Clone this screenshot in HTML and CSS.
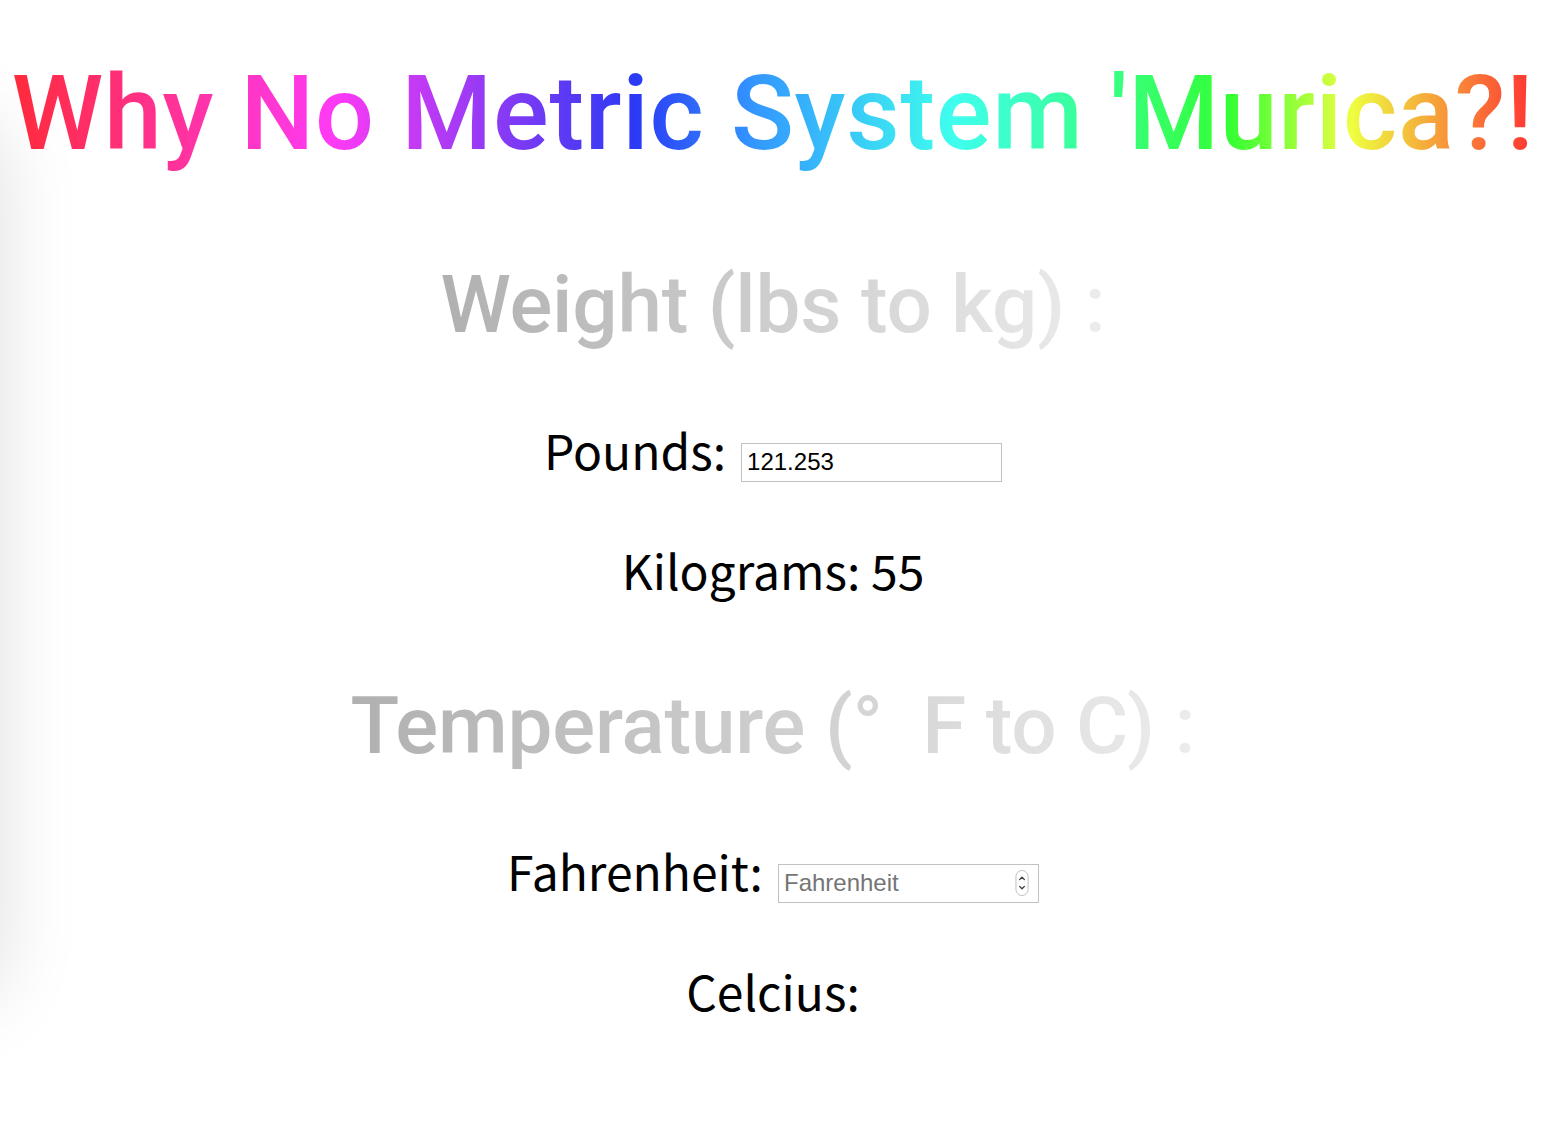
FILE: index.html
```html
<!DOCTYPE html>
<html lang="en">
<head>
<meta charset="utf-8">
<title>Why No Metric System 'Murica?!</title>
<link rel="stylesheet" href="styles.css">
</head>
<body>
<main class="page">
  <h1 class="title"><span class="rainbow">Why No Metric System 'Murica?!</span></h1>

  <h2 class="section"><span class="fade">Weight (lbs to kg) :</span></h2>
  <p class="row"><label class="label" for="lbs">Pounds:</label><span class="field-wrap"><input id="lbs" class="field" type="number" value="121.253"></span></p>
  <p class="row">Kilograms: 55</p>

  <h2 class="section"><span class="fade">Temperature (°&nbsp; F to C) :</span></h2>
  <p class="row"><label class="label" for="fahr">Fahrenheit:</label><span class="field-wrap"><input id="fahr" class="field" type="number" placeholder="Fahrenheit"><span class="spinner" aria-hidden="true"><svg width="14" height="26" viewBox="0 0 14 26"><rect x="1" y="0.5" width="12" height="25" rx="6" fill="#fff" stroke="#c6c6c6"/><path d="M4.6 9.6 L7 7.2 L9.4 9.6" fill="none" stroke="#3a3a3a" stroke-width="1.3" stroke-linecap="round" stroke-linejoin="round"/><path d="M4.6 16.4 L7 18.8 L9.4 16.4" fill="none" stroke="#3a3a3a" stroke-width="1.3" stroke-linecap="round" stroke-linejoin="round"/></svg></span></span></p>
  <p class="row">Celcius: </p>
</main>
</body>
</html>
```

FILE: styles.css
```css
html, body {
  margin: 0;
  padding: 0;
  background: #ffffff;
}

body {
  position: relative;
  min-height: 1136px;
  overflow: hidden;
}

body::before {
  content: "";
  position: absolute;
  left: -220px;
  top: 120px;
  width: 220px;
  height: 880px;
  border-radius: 40px;
  box-shadow: 0 0 80px rgba(0, 0, 0, 0.13);
  pointer-events: none;
}

.page {
  position: relative;
  padding: 52px 2px 0 0;
  text-align: center;
  color: #000;
  font-family: "Noto Sans CJK JP", "Noto Sans", sans-serif;
}

.title {
  margin: 0 0 81px;
  font-family: Roboto, "Liberation Sans", sans-serif;
  font-weight: 500;
  font-size: 104px;
  line-height: 124px;
  letter-spacing: 0.7px;
  white-space: nowrap;
}

.rainbow {
  display: inline-block;
  background: linear-gradient(90deg, #ff2a3a 0%, #ff3af5 21%, #2a3af5 41%, #3399ff 49%, #3fffee 62%, #33ff33 80%, #eeff40 88%, #ff3333 100%);
  -webkit-background-clip: text;
  background-clip: text;
  color: transparent;
}

.section {
  margin: 79px 0 66px;
  font-family: Roboto, "Liberation Sans", sans-serif;
  font-weight: 500;
  font-size: 80px;
  line-height: 96px;
  letter-spacing: -0.2px;
  white-space: nowrap;
}

.fade {
  display: inline-block;
  background: linear-gradient(90deg, #b0b0b0 0%, #ececec 100%);
  -webkit-background-clip: text;
  background-clip: text;
  color: transparent;
}

.row {
  margin: 0 0 60px;
  height: 60px;
  font-size: 48px;
  line-height: 60px;
  font-weight: 400;
  white-space: nowrap;
}

.label {
  font: inherit;
}

.field-wrap {
  position: relative;
  display: inline-flex;
  margin-left: 15px;
  vertical-align: baseline;
}

.field {
  box-sizing: border-box;
  width: 261px;
  height: 39px;
  margin: 0;
  padding: 0 5px;
  border: 1px solid #c2c2c2;
  border-radius: 0;
  background: #fff;
  color: #000;
  font-family: "Liberation Sans", Arial, sans-serif;
  font-size: 24px;
  outline: none;
  -moz-appearance: textfield;
}

.field::-webkit-inner-spin-button,
.field::-webkit-outer-spin-button {
  -webkit-appearance: none;
  margin: 0;
}

.field::placeholder {
  color: #757575;
}

.spinner {
  position: absolute;
  right: 10px;
  top: 6px;
  width: 14px;
  height: 26px;
  line-height: 0;
  filter: drop-shadow(0 0.5px 0.5px rgba(0, 0, 0, 0.12));
}
```
